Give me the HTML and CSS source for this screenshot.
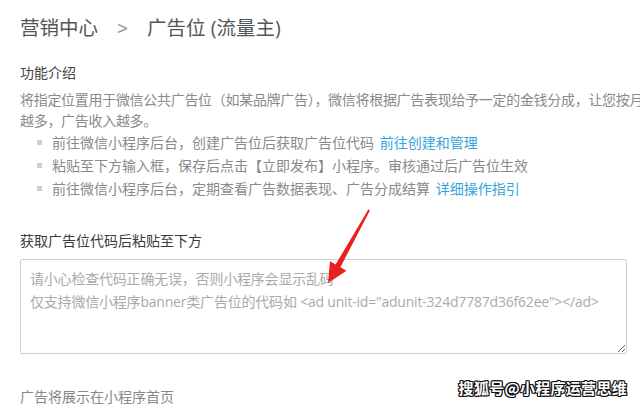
FILE: index.html
```html
<!DOCTYPE html>
<html lang="zh-CN">
<head>
  <meta charset="UTF-8">
  <meta name="viewport" content="width=device-width, initial-scale=1.0">
  <title>广告位 (流量主)</title>
  <link rel="stylesheet" href="styles.css">
</head>
<body>
  <div class="page">
    <h1 class="crumbs">
      <span>营销中心</span>
      <span class="sep">&gt;</span>
      <span>广告位 (流量主)</span>
    </h1>

    <section class="intro">
      <h2 class="label">功能介绍</h2>
      <p class="desc">将指定位置用于微信公共广告位（如某品牌广告），微信将根据广告表现给予一定的金钱分成，让您按月获得收入，广告曝光<br>越多，广告收入越多。</p>
      <ul class="steps">
        <li>前往微信小程序后台，创建广告位后获取广告位代码 <a href="#">前往创建和管理</a></li>
        <li>粘贴至下方输入框，保存后点击【立即发布】小程序。审核通过后广告位生效</li>
        <li>前往微信小程序后台，定期查看广告数据表现、广告分成结算 <a href="#">详细操作指引</a></li>
      </ul>
    </section>

    <section class="code">
      <h2 class="label">获取广告位代码后粘贴至下方</h2>
      <textarea class="code-box" placeholder="请小心检查代码正确无误，否则小程序会显示乱码&#10;仅支持微信小程序banner类广告位的代码如 <ad unit-id=&quot;adunit-324d7787d36f62ee&quot;></ad>"></textarea>
    </section>

    <p class="note">广告将展示在小程序首页</p>
  </div>

  <svg class="arrow" width="100" height="100" viewBox="0 0 100 100">
    <polygon points="68.3,9.6 69.9,10.6 40.4,67.2 46.5,70.8 28,83 30,61.2 35.6,64.6" fill="#e8211c"/>
  </svg>

  <div class="watermark">搜狐号@小程序运营思维</div>
</body>
</html>
```

FILE: styles.css
```css
* {
  box-sizing: border-box;
  margin: 0;
  padding: 0;
}

html, body {
  width: 640px;
  height: 407px;
  overflow: hidden;
  background: #fff;
}

body {
  position: relative;
  font-family: "Open Sans", "Noto Sans CJK SC", sans-serif;
  font-size: 14px;
  color: #8a8a8a;
}

.page {
  padding: 14px 13px 0 20px;
}

.crumbs {
  display: flex;
  gap: 17px;
  font-size: 19.5px;
  font-weight: 400;
  line-height: 28px;
  color: #555;
}

.crumbs .sep {
  color: #999;
  font-family: "DejaVu Sans", sans-serif;
  font-size: 18px;
  transform: scaleX(0.8);
}

.label {
  font-size: 14px;
  font-weight: 400;
  line-height: 21px;
  color: #444;
}

.intro {
  margin-top: 20px;
}

.desc {
  margin-top: 6px;
  line-height: 21px;
  letter-spacing: -0.3px;
  white-space: nowrap;
}

.steps {
  list-style: none;
  padding-left: 17px;
}

.steps li {
  position: relative;
  padding-left: 15px;
  line-height: 23px;
  white-space: nowrap;
}

.steps li::before {
  content: "";
  position: absolute;
  left: 0;
  top: 9px;
  width: 5px;
  height: 5px;
  background: #d0d0d0;
}

.steps a {
  color: #36a3dc;
  text-decoration: none;
  margin-left: 2px;
}

.code {
  margin-top: 30px;
}

.code .label {
  color: #3a3a3a;
}

.code-box {
  display: block;
  width: 607px;
  height: 95px;
  margin-top: 8px;
  padding: 7px 9px;
  border: 1px solid #cfcfcf;
  border-radius: 2px;
  font-family: "Open Sans", "Noto Sans CJK SC", sans-serif;
  font-size: 14px;
  line-height: 23px;
  letter-spacing: -0.2px;
  color: #555;
  resize: both;
  outline: none;
}

.code-box::placeholder {
  color: #aaa;
}

.note {
  margin-top: 32px;
  line-height: 21px;
  color: #888;
}

.arrow {
  position: absolute;
  left: 300px;
  top: 200px;
}

.watermark {
  position: absolute;
  right: 13px;
  bottom: 9px;
  font-family: "Noto Sans CJK SC", sans-serif;
  font-size: 15px;
  font-weight: 700;
  color: #fff;
  letter-spacing: 0.3px;
  text-shadow:
    -1px -1px 0 #111, 1px -1px 0 #111,
    -1px 1px 0 #111, 1px 1px 0 #111,
    0 1px 0 #111, 0 -1px 0 #111,
    1px 0 0 #111, -1px 0 0 #111;
}
```
